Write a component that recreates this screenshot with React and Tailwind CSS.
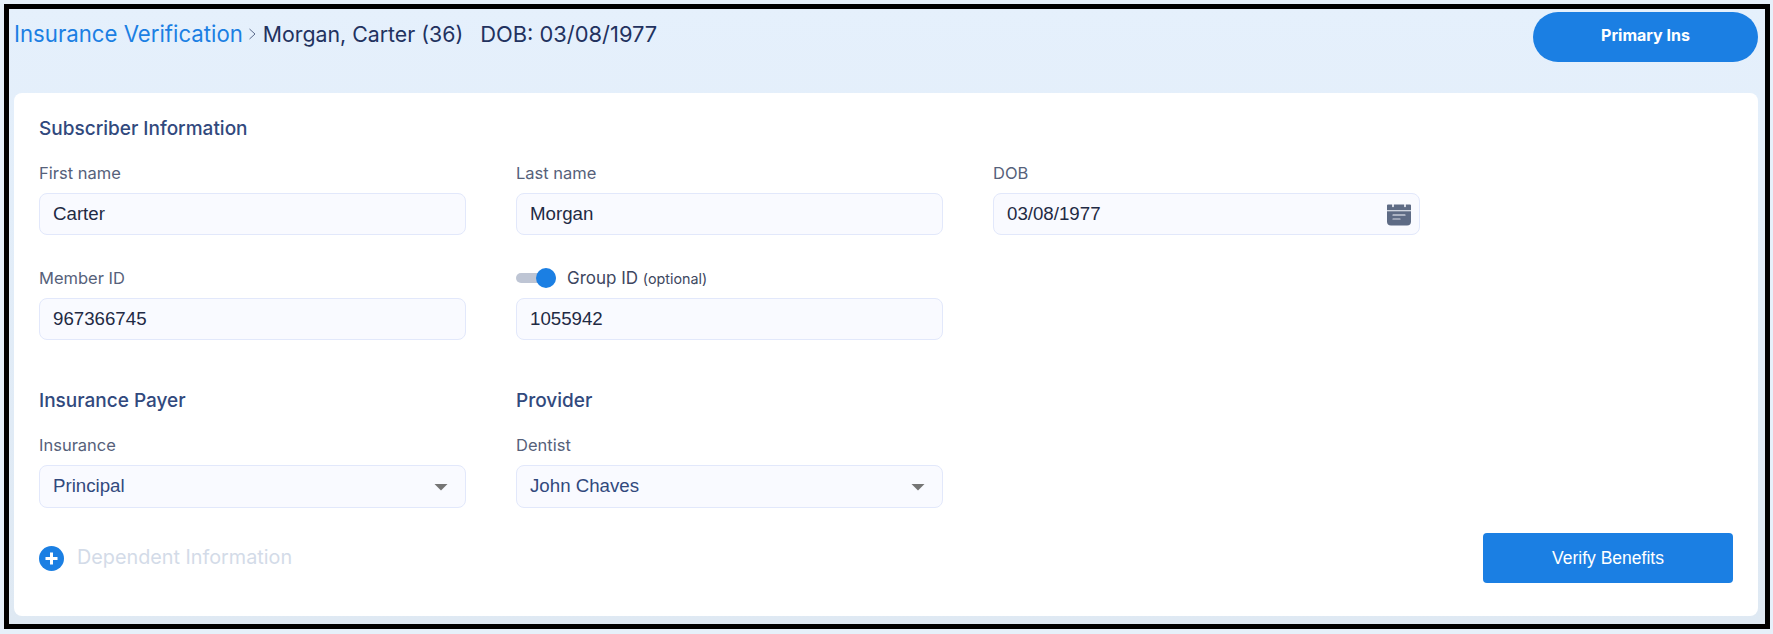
import React from "react";

const heading = "font-['Inter','Noto_Sans',sans-serif]";
const arial = "font-['Liberation_Sans',Arial,sans-serif]";

function Label({ children }) {
  return <div className={`h-5 leading-[21px] mb-[10px] text-[16.500px] text-[#56617a] ${heading}`}>{children}</div>;
}

function Box({ children, tone = "text-[#1f2a44]", right, tall }) {
  return (
    <div className={`${tall ? "h-[43px]" : "h-[42px]"} w-[427px] flex items-center justify-between pl-[13px] pr-[7px] rounded-lg border border-[#e2e8fb] bg-[#f9faff] text-[18.700px] ${tone} ${arial}`}>
      <span>{children}</span>
      {right}
    </div>
  );
}

function Caret() {
  return (
    <svg width="16" height="8" viewBox="0 0 16 8" className="mr-[9px]">
      <path d="M1.5 1h13L8 7.5z" fill="#757575" />
    </svg>
  );
}

function CalendarIcon() {
  return (
    <svg width="26" height="26" viewBox="0 0 26 26">
      <path d="M1 10.2h24v10.3a4 4 0 0 1-4 4H5a4 4 0 0 1-4-4z" fill="#5e6b85" />
      <path d="M1 9.2V4.5a1 1 0 0 1 1-1h22a1 1 0 0 1 1 1v4.700z" fill="#5e6b85" />
      <path d="M7 1.800v3.600M19 1.800v3.600" stroke="#f8f9ff" strokeWidth="1.600" strokeLinecap="round" />
      <path d="M7 14h12" stroke="#f8f9ff" strokeWidth="1.200" strokeLinecap="round" />
      <path d="M7 18h7" stroke="#d5d9e3" strokeWidth="1.200" strokeLinecap="round" />
    </svg>
  );
}

export default function App() {
  return (
    <div className="h-[634px] w-[1773px] bg-[#e6f0fa] pt-1 pl-1 overflow-hidden">
      <div className="w-[1766px] h-[625px] border-[5px] border-black bg-gradient-to-b from-[#e5f0fc] to-[#dfe9f3] pl-[5px] pr-[7px]">
        <header className="h-[84px] flex items-start justify-between">
          <div className={`pt-[10px] flex items-center text-[21.300px] leading-[30px] text-[#22325f] ${heading}`}>
            <span className="text-[#1b7fe3] text-[22.200px]">Insurance Verification</span>
            <svg width="9" height="14" viewBox="0 0 9 14" className="ml-[5px] mr-[6px]">
              <path d="M1.500 2l5.500 5-5.500 5" fill="none" stroke="#5c6b8c" strokeWidth="1" />
            </svg>
            <span>Morgan, Carter (36)</span>
            <span className="ml-[17px] text-[21.900px]">DOB: 03/08/1977</span>
          </div>
          <button className={`mt-[3px] pb-[5px] h-[50px] w-[225px] rounded-full bg-[#1b7fe3] text-white text-[16px] font-bold ${heading}`}>
            Primary Ins
          </button>
        </header>

        <main className="h-[523px] rounded-lg bg-white px-[25px] pt-[23px]">
          <h2 className={`h-6 leading-[26px] text-[19px] font-medium text-[#31497d] ${heading}`}>Subscriber Information</h2>

          <div className="mt-[23px] grid grid-cols-[427px_427px_427px] gap-x-[50px] gap-y-[33px]">
            <div>
              <Label>First name</Label>
              <Box>Carter</Box>
            </div>
            <div>
              <Label>Last name</Label>
              <Box>Morgan</Box>
            </div>
            <div>
              <Label>DOB</Label>
              <Box right={<CalendarIcon />}>03/08/1977</Box>
            </div>
            <div>
              <Label>Member ID</Label>
              <Box>967366745</Box>
            </div>
            <div className="col-span-2">
              <div className="h-5 mb-[10px] flex items-center">
                <div className="relative w-10 h-[10px] rounded-full bg-[#bec5d4]">
                  <span className="absolute -top-[5px] right-0 size-5 rounded-full bg-[#1b7fe3]" />
                </div>
                <span className={`ml-[11px] text-[17px] leading-5 text-[#3d4760] ${heading}`}>
                  Group ID <span className="text-[14.300px]">(optional)</span>
                </span>
              </div>
              <Box>1055942</Box>
            </div>
          </div>

          <div className="mt-[48px] grid grid-cols-[427px_427px] gap-x-[50px]">
            <div>
              <h2 className={`h-6 leading-[26px] text-[19px] font-medium text-[#31497d] mb-[23px] ${heading}`}>Insurance Payer</h2>
              <Label>Insurance</Label>
              <Box tall tone="text-[#31497d]" right={<Caret />}>Principal</Box>
            </div>
            <div>
              <h2 className={`h-6 leading-[26px] text-[19px] font-medium text-[#31497d] mb-[23px] ${heading}`}>Provider</h2>
              <Label>Dentist</Label>
              <Box tall tone="text-[#31497d]" right={<Caret />}>John Chaves</Box>
            </div>
          </div>

          <div className="mt-[25px] flex items-center justify-between">
            <div className="flex items-center gap-[13px]">
              <svg width="25" height="25" viewBox="0 0 25 25">
                <circle cx="12.500" cy="12.500" r="12.500" fill="#1b7fe3" />
                <path d="M12.500 6.500v12M6.500 12.500h12" stroke="#fff" strokeWidth="3" />
              </svg>
              <span className={`text-[19.800px] text-[#d3dbe8] ${heading}`}>Dependent Information</span>
            </div>
            <button className={`h-[50px] w-[250px] rounded bg-[#1b7fe3] text-white text-[17.500px] ${arial}`}>
              Verify Benefits
            </button>
          </div>
        </main>
      </div>
    </div>
  );
}
